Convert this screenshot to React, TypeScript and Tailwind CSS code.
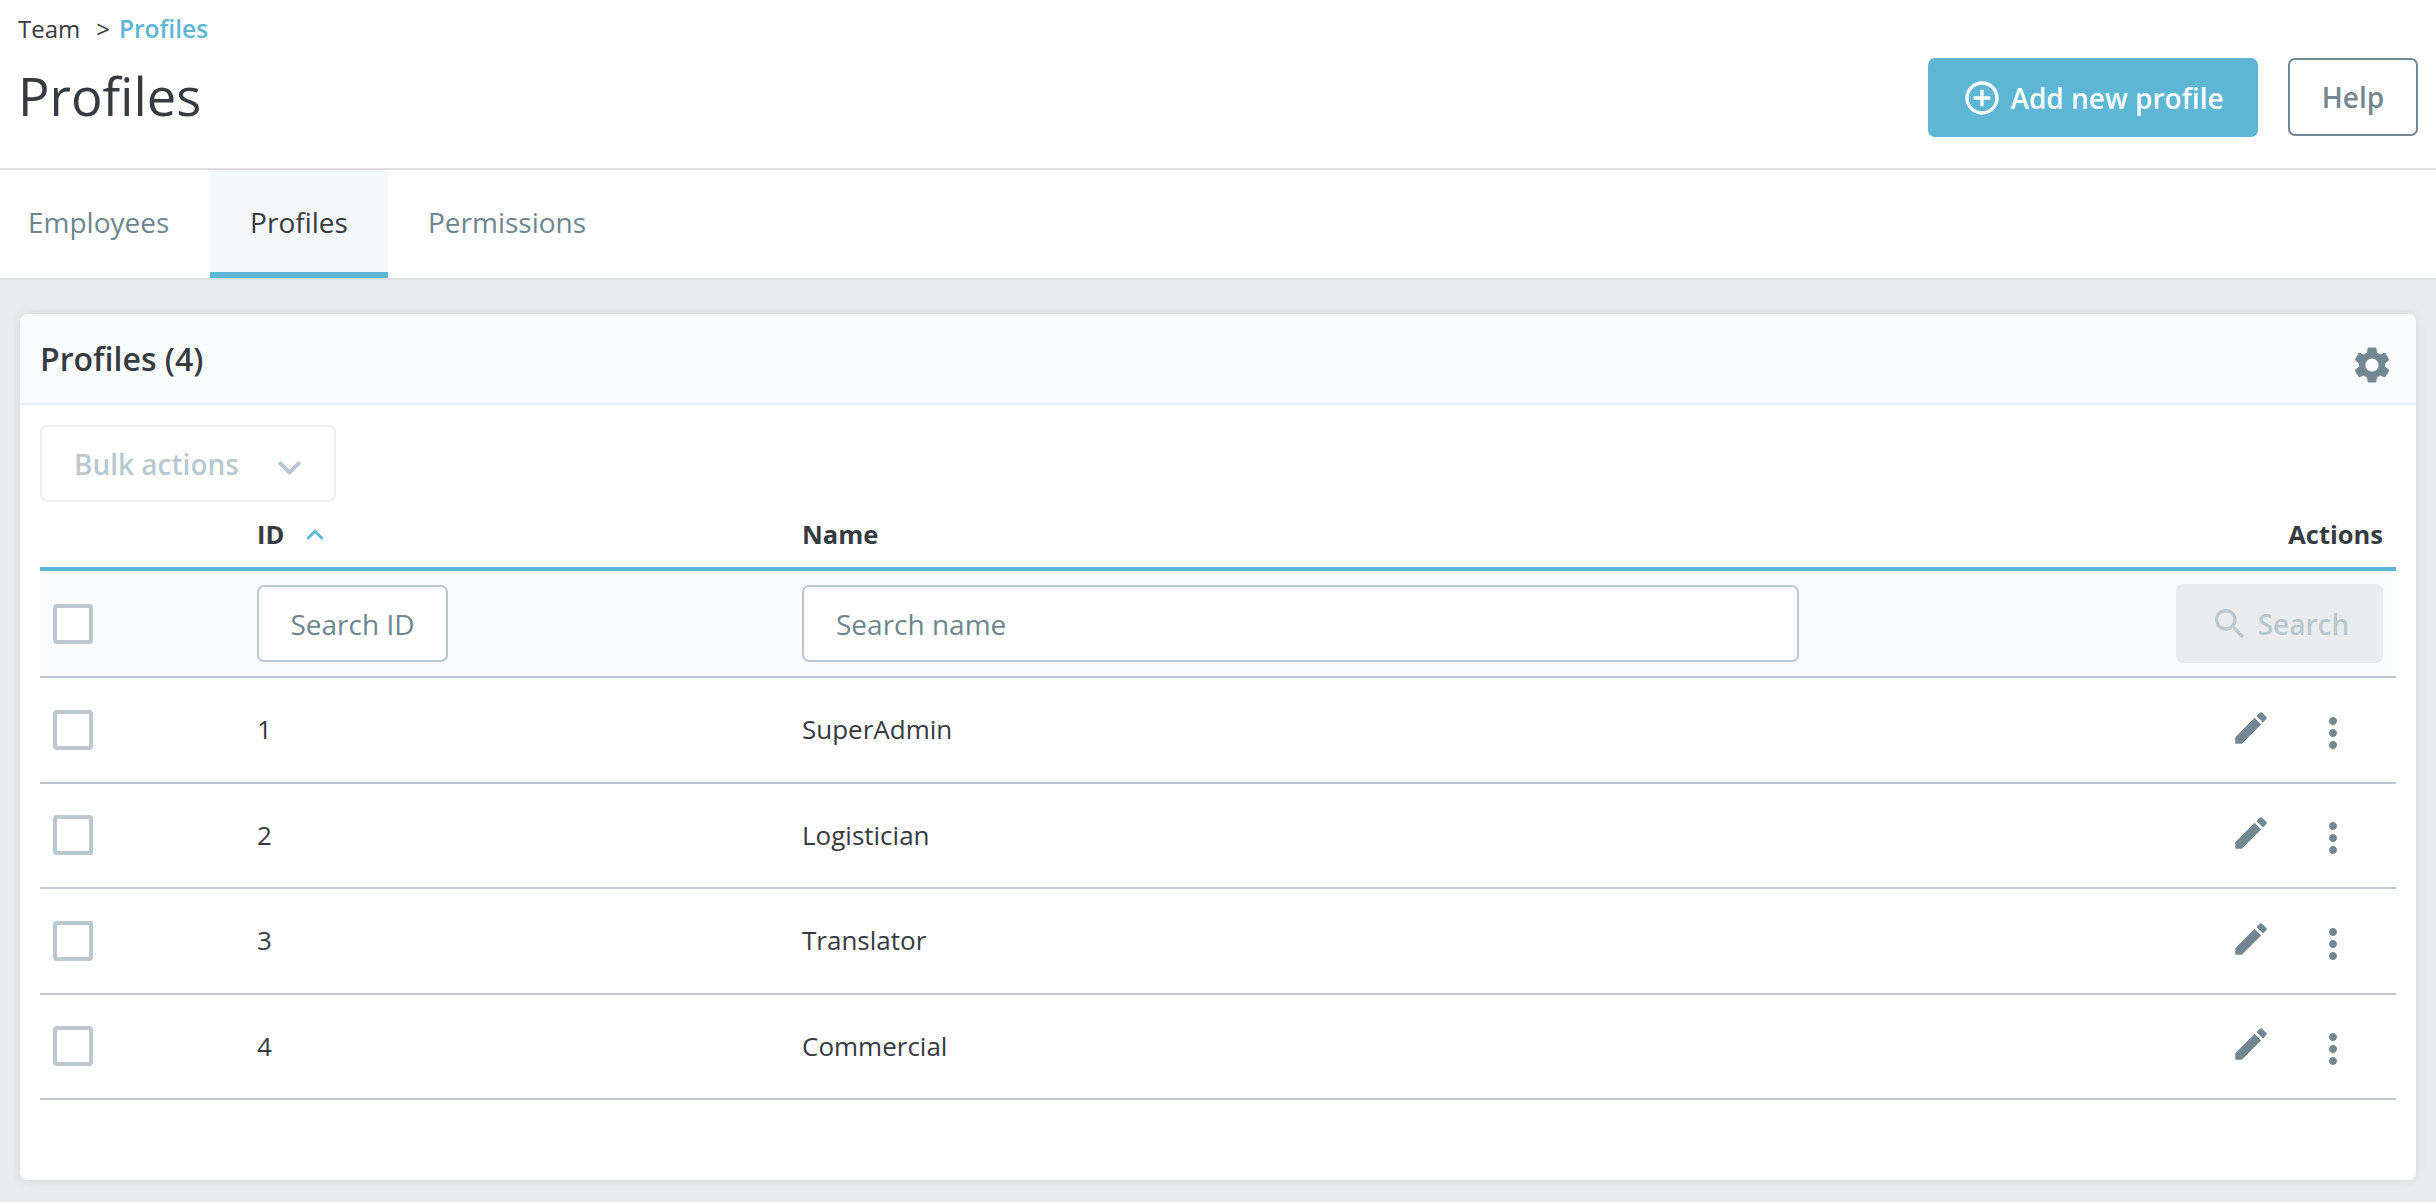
// App.tsx
const font = { fontFamily: '"Open Sans", sans-serif' }

function Icon({ d, className }: { d: string; className: string }) {
  return (
    <svg viewBox="0 0 24 24" fill="currentColor" className={className} aria-hidden="true">
      <path d={d} />
    </svg>
  )
}

const icons = {
  add: 'M13 7h-2v4H7v2h4v4h2v-4h4v-2h-4V7zm-1-5C6.48 2 2 6.48 2 12s4.48 10 10 10 10-4.48 10-10S17.52 2 12 2zm0 18c-4.41 0-8-3.59-8-8s3.59-8 8-8 8 3.59 8 8-3.59 8-8 8z',
  gear: 'M19.14 12.94c.04-.3.06-.61.06-.94 0-.32-.02-.64-.07-.94l2.03-1.58c.18-.14.23-.41.12-.61l-1.92-3.32c-.12-.22-.37-.29-.59-.22l-2.39.96c-.5-.38-1.03-.7-1.62-.94l-.36-2.54c-.04-.24-.24-.41-.48-.41h-3.84c-.24 0-.43.17-.47.41l-.36 2.54c-.59.24-1.13.57-1.62.94l-2.39-.96c-.22-.08-.47 0-.59.22L2.74 8.87c-.12.21-.08.47.12.61l2.03 1.58c-.05.3-.09.63-.09.94s.02.64.07.94l-2.03 1.58c-.18.14-.23.41-.12.61l1.92 3.32c.12.22.37.29.59.22l2.39-.96c.5.38 1.03.7 1.62.94l.36 2.54c.05.24.24.41.48.41h3.84c.24 0 .44-.17.47-.41l.36-2.54c.59-.24 1.13-.56 1.62-.94l2.39.96c.22.08.47 0 .59-.22l1.92-3.32c.12-.22.07-.47-.12-.61l-2.01-1.58zM12 15.6c-1.98 0-3.6-1.62-3.6-3.6s1.62-3.6 3.6-3.6 3.6 1.62 3.6 3.6-1.62 3.6-3.6 3.6z',
  edit: 'M3 17.25V21h3.75L17.81 9.94l-3.75-3.75L3 17.25zM20.71 7.04c.39-.39.39-1.02 0-1.41l-2.34-2.34c-.39-.39-1.02-.39-1.41 0l-1.83 1.83 3.75 3.75 1.83-1.83z',
  search: 'M15.5 14h-.79l-.28-.27C15.41 12.59 16 11.11 16 9.5 16 5.91 13.09 3 9.5 3S3 5.91 3 9.5 5.91 16 9.5 16c1.61 0 3.09-.59 4.23-1.57l.27.28v.79l5 4.99L20.49 19l-4.99-5zm-6 0C7.01 14 5 11.99 5 9.5S7.01 5 9.5 5 14 7.01 14 9.5 11.99 14 9.5 14z',
  down: 'M16.59 8.59L12 13.17 7.41 8.59 6 10l6 6 6-6z',
  up: 'M7.41 15.41L12 10.83l4.59 4.58L18 14l-6-6-6 6z',
  more: 'M12 8c1.1 0 2-.9 2-2s-.9-2-2-2-2 .9-2 2 .9 2 2 2zm0 2c-1.1 0-2 .9-2 2s.9 2 2 2 2-.9 2-2-.9-2-2-2zm0 6c-1.1 0-2 .9-2 2s.9 2 2 2 2-.9 2-2-.9-2-2-2z',
}

const rows = [
  { id: 1, name: 'SuperAdmin' },
  { id: 2, name: 'Logistician' },
  { id: 3, name: 'Translator' },
  { id: 4, name: 'Commercial' },
]

function Checkbox() {
  return <div className="ml-[13px] h-[40px] w-[40px] rounded-[4px] border-[4px] border-[#b9c7ce] bg-white"></div>
}

export default function App() {
  return (
    <div className="flex h-[1202px] flex-col overflow-hidden bg-[#e9ebec] text-[#363a41]" style={font}>
      {/* page header */}
      <header className="flex h-[170px] shrink-0 justify-between border-b-2 border-[#dfdfdf] bg-white pl-[18px] pr-[18px]">
        <div>
          <div className="mt-[12px] flex h-[34px] items-center text-[24px]">
            <span>Team</span>
            <span className="ml-[16px]">&gt;</span>
            <span className="ml-[9px] text-[24.5px] font-semibold text-[#5cb6d4]">Profiles</span>
          </div>
          <h1 className="mt-[15px] text-[52.5px] leading-[70px] font-normal">Profiles</h1>
        </div>
        <div className="mt-[58px] flex h-[79px] items-start gap-[30px]">
          <button className="flex h-[79px] w-[330px] items-center justify-center gap-[8px] rounded-[7px] bg-[#5cb6d4] text-[28px] font-semibold text-white">
            <Icon d={icons.add} className="h-[40px] w-[40px]" />
            Add new profile
          </button>
          <button className="h-[78px] w-[130px] rounded-[7px] border-2 border-[#738791] text-[28px] font-semibold text-[#738791]">
            Help
          </button>
        </div>
      </header>

      {/* tabs */}
      <nav className="flex h-[110px] shrink-0 border-b-2 border-[#dfe2e3] bg-white text-[28px] text-[#6c868e]">
        <div className="flex w-[210px] items-center pb-[4px] pl-[28px]">Employees</div>
        <div className="flex w-[178px] items-center justify-center border-b-[6px] border-[#5cb6d4] bg-[#f5f8fb] pt-[2px] text-[#363a41]">
          Profiles
        </div>
        <div className="flex items-center pb-[4px] pl-[40px]">Permissions</div>
      </nav>

      {/* card */}
      <section className="mx-[20px] mt-[34px] flex h-[866px] flex-col rounded-[8px] bg-white shadow-[0_0_12px_rgba(0,0,0,0.09)]">
        <div className="relative flex h-[91px] shrink-0 items-center rounded-t-[8px] border-b-2 border-[#e2eaed] bg-[#fafbfc] pl-[20px]">
          <h2 className="text-[32px] font-semibold">Profiles (4)</h2>
          <Icon d={icons.gear} className="absolute right-[22px] top-[29px] h-[44px] w-[44px] text-[#738791]" />
        </div>

        <div className="flex flex-col px-[20px] pt-[20px]">
          <div className="flex h-[77px] w-[296px] items-center rounded-[7px] border-2 border-[#eceeef] pl-[32px] text-[28px] font-semibold text-[#b9c8cf]">
            Bulk actions
            <Icon d={icons.down} className="ml-[27px] mt-[8px] h-[47px] w-[47px]" />
          </div>

          {/* head */}
          <div className="grid h-[69px] grid-cols-[217px_545px_1fr_auto] items-center border-b-4 border-[#5cb6d4] pr-[13px] text-[25.5px] font-bold">
            <div></div>
            <div className="flex items-center">
              ID
              <Icon d={icons.up} className="ml-[14px] h-[34px] w-[34px] text-[#5cb6d4]" />
            </div>
            <div>Name</div>
            <div className="text-right">Actions</div>
          </div>

          {/* filters */}
          <div className="grid h-[107px] grid-cols-[217px_545px_1fr_auto] items-center border-b-2 border-[#bcc8ce] bg-[#fafbfc] pr-[13px]">
            <Checkbox />
            <div className="flex h-[77px] w-[191px] items-center justify-center rounded-[7px] border-2 border-[#b9c7ce] bg-white text-[28px] text-[#6c868e]">
              Search ID
            </div>
            <div className="flex h-[77px] w-[997px] items-center rounded-[7px] border-2 border-[#b9c7ce] bg-white pl-[32px] text-[28px] text-[#6c868e]">
              Search name
            </div>
            <div className="flex h-[79px] w-[207px] items-center justify-center gap-[8px] rounded-[7px] bg-[#eaebec] text-[28px] font-semibold text-[#b9c8cf]">
              <Icon d={icons.search} className="h-[40px] w-[40px]" />
              Search
            </div>
          </div>

          {/* rows */}
          {rows.map((row) => (
            <div
              key={row.id}
              className="grid h-[105.5px] grid-cols-[217px_545px_1fr_auto] items-center border-b-2 border-[#bcc8ce] pr-[13px] text-[26px]"
            >
              <Checkbox />
              <div>{row.id}</div>
              <div>{row.name}</div>
              <div className="flex items-center text-[#738791]">
                <Icon d={icons.edit} className="mb-[4px] h-[42px] w-[42px]" />
                <Icon d={icons.more} className="ml-[37px] mr-[26px] mt-[6px] h-[48px] w-[48px]" />
              </div>
            </div>
          ))}
        </div>
      </section>
    </div>
  )
}
